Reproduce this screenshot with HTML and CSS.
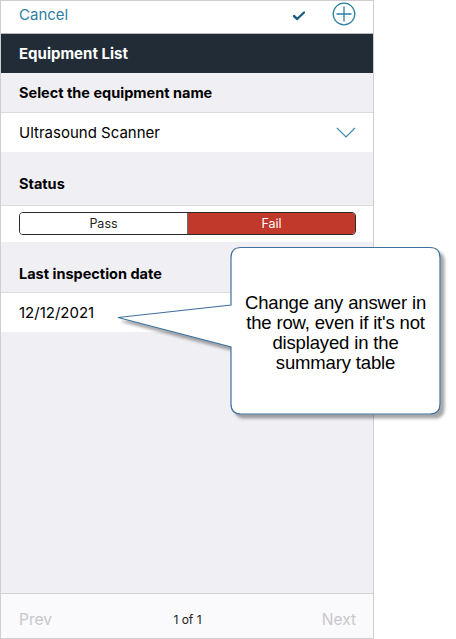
FILE: index.html
```html
<!DOCTYPE html>
<html>
<head>
<meta charset="utf-8">
<link rel="stylesheet" href="styles.css">
</head>
<body>
<div class="phone">
  <div class="topbar">
    <span class="cancel">Cancel</span>
    <div class="actions">
      <svg class="check" width="12" height="10" viewBox="0 0 12 10"><path d="M1 5 L4.2 8 L11 1.5" fill="none" stroke="#1d5e86" stroke-width="2.4" stroke-linecap="round" stroke-linejoin="round"/></svg>
      <svg class="plus" width="24" height="24" viewBox="0 0 24 24"><circle cx="12" cy="12" r="10.8" fill="none" stroke="#2f7fa3" stroke-width="1.3"/><path d="M12 4.5 V19.5 M4.5 12 H19.5" stroke="#2f7fa3" stroke-width="1.3"/></svg>
    </div>
  </div>
  <div class="titlebar">Equipment List</div>
  <div class="label label-center">Select the equipment name</div>
  <div class="row row-select">
    <span>Ultrasound Scanner</span>
    <svg class="chev" width="20" height="11" viewBox="0 0 20 11"><path d="M1 1 L10 10 L19 1" fill="none" stroke="#3a8ab0" stroke-width="1.2"/></svg>
  </div>
  <div class="label label-status">Status</div>
  <div class="seg-row">
    <div class="seg">
      <div class="seg-item">Pass</div>
      <div class="seg-item seg-active">Fail</div>
    </div>
  </div>
  <div class="label label-date">Last inspection date</div>
  <div class="row row-date">12/12/2021</div>
  <div class="filler"></div>
  <div class="footer">
    <span class="nav">Prev</span>
    <span class="count">1 of 1</span>
    <span class="nav">Next</span>
  </div>
</div>

<svg class="callout-shape" width="456" height="639" viewBox="0 0 456 639">
  <defs>
    <filter id="sh" x="-20%" y="-20%" width="140%" height="140%">
      <feDropShadow dx="4" dy="4" stdDeviation="1.5" flood-color="#000" flood-opacity="0.35"/>
    </filter>
  </defs>
  <path d="M241 247.5 H430 Q440 247.5 440 257.5 V404 Q440 414 430 414 H241 Q231 414 231 404 V347 L118 317.5 L231 305 V257.5 Q231 247.5 241 247.5 Z" fill="#fff" stroke="#41719c" stroke-width="1.2" filter="url(#sh)"/>
</svg>
<div class="callout-text">Change any answer in<br>the row, even if it's not<br>displayed in the<br>summary table</div>
</body>
</html>
```

FILE: styles.css
```css
* { box-sizing: border-box; }
html, body { margin: 0; padding: 0; background: #fff; }
body { width: 456px; height: 639px; position: relative; overflow: hidden; }

.phone {
  width: 374px;
  height: 639px;
  border: 1px solid #cfcfd3;
  display: flex;
  flex-direction: column;
  background: #f0eff4;
  font-family: Inter, "Noto Sans", sans-serif;
  color: #000;
}

.topbar {
  height: 33px;
  background: #fff;
  border-bottom: 1px solid #b9b9bd;
  display: flex;
  align-items: center;
  justify-content: space-between;
  padding: 0 17px 0 18px;
  flex-shrink: 0;
}
.cancel { color: #2f7fa3; font-size: 15px; margin-top: -6px; }
.actions { display: flex; align-items: center; gap: 27px; margin-top: -6px; }
.check { display: block; margin-top: 3px; }
.plus { display: block; }

.titlebar {
  height: 39px;
  background: #222c37;
  color: #fff;
  font-weight: 700;
  font-size: 15px;
  display: flex;
  align-items: center;
  padding: 0 18px;
  flex-shrink: 0;
}

.label {
  font-weight: 700;
  font-size: 14.5px;
  padding: 0 18px;
  display: flex;
  flex-shrink: 0;
  line-height: 18px;
}
.label-center { height: 40px; align-items: center; border-bottom: 1px solid #dcdce0; }
.label-status { height: 54px; align-items: flex-end; padding-bottom: 12px; border-bottom: 1px solid #dcdce0; }
.label-date { height: 51px; align-items: flex-end; padding-bottom: 9px; border-bottom: 1px solid #dcdce0; }

.row {
  height: 39px;
  background: #fff;
  display: flex;
  align-items: center;
  justify-content: space-between;
  padding: 0 18px;
  font-size: 15px;
  flex-shrink: 0;
}
.chev { display: block; margin-right: -1px; }

.seg-row {
  height: 36px;
  background: #fff;
  padding: 6px 17px 0 18px;
  flex-shrink: 0;
}
.seg {
  height: 23px;
  border: 1px solid #2a2a2a;
  border-radius: 4px;
  overflow: hidden;
  display: flex;
}
.seg-item {
  flex: 1;
  display: flex;
  align-items: center;
  justify-content: center;
  font-size: 12.5px;
  color: #222;
  background: #fff;
}
.seg-active { background: #c0392b; color: #fff; border-left: 1px solid #6b6b6b; }

.filler { flex: 1; }

.footer {
  height: 45px;
  border-top: 1px solid #d4d4d8;
  background: #faf9fb;
  display: flex;
  align-items: center;
  justify-content: space-between;
  padding: 6px 17px 0 18px;
  flex-shrink: 0;
}
.nav { color: #c8c8cc; font-size: 15.5px; width: 60px; }
.nav:last-child { text-align: right; }
.count { font-size: 12px; color: #222; }

.callout-shape { position: absolute; left: 0; top: 0; }
.callout-text {
  position: absolute;
  left: 231px;
  top: 250px;
  width: 209px;
  height: 166px;
  display: flex;
  align-items: center;
  justify-content: center;
  text-align: center;
  font-family: "Liberation Sans", Arial, sans-serif;
  font-size: 18.5px;
  line-height: 20px;
  color: #000;
  letter-spacing: -0.15px;
}
```
